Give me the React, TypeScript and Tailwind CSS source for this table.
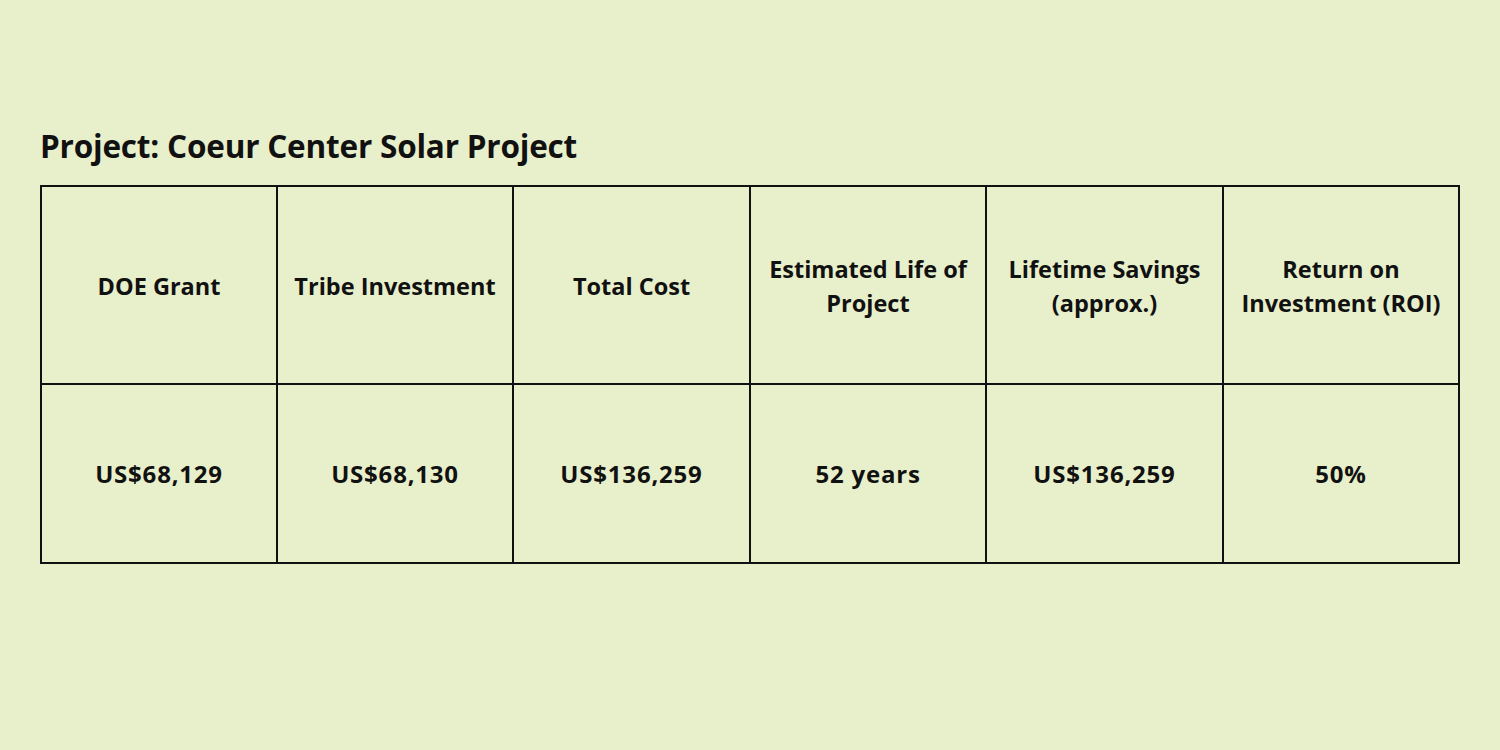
import React from "react";

const headers = [
  ["DOE Grant"],
  ["Tribe Investment"],
  ["Total Cost"],
  ["Estimated Life of", "Project"],
  ["Lifetime Savings", "(approx.)"],
  ["Return on", "Investment (ROI)"],
];
const values = ["US$68,129", "US$68,130", "US$136,259", "52 years", "US$136,259", "50%"];

export default function App() {
  return (
    <div
      className="w-[1500px] h-[750px] bg-[#e8efcb] text-[#111111] pt-[126px] px-[40px]"
      style={{ fontFamily: '"Open Sans", "Noto Sans", sans-serif' }}
    >
      <h1 className="text-[31.5px] leading-[40px] font-bold mb-[19px] tracking-[-0.2px]">
        Project: Coeur Center Solar Project
      </h1>
      <div className="w-[1420px] grid grid-cols-[236px_236px_237px_236px_237px_1fr] border-2 border-[#111111]">
        {headers.map((h, i) => (
          <div
            key={i}
            className={`h-[198px] pt-[1px] flex flex-col items-center justify-center text-center text-[23.5px] leading-[34px] font-bold border-b-2 border-[#111111] ${i < 5 ? "border-r-2" : ""}`}
          >
            {h.map((l, j) => (
              <span key={j}>{l}</span>
            ))}
          </div>
        ))}
        {values.map((v, i) => (
          <div
            key={i}
            className={`h-[177px] flex items-center justify-center text-[24px] tracking-[0.8px] font-bold border-[#111111] ${i < 5 ? "border-r-2" : ""}`}
          >
            {v}
          </div>
        ))}
      </div>
    </div>
  );
}
